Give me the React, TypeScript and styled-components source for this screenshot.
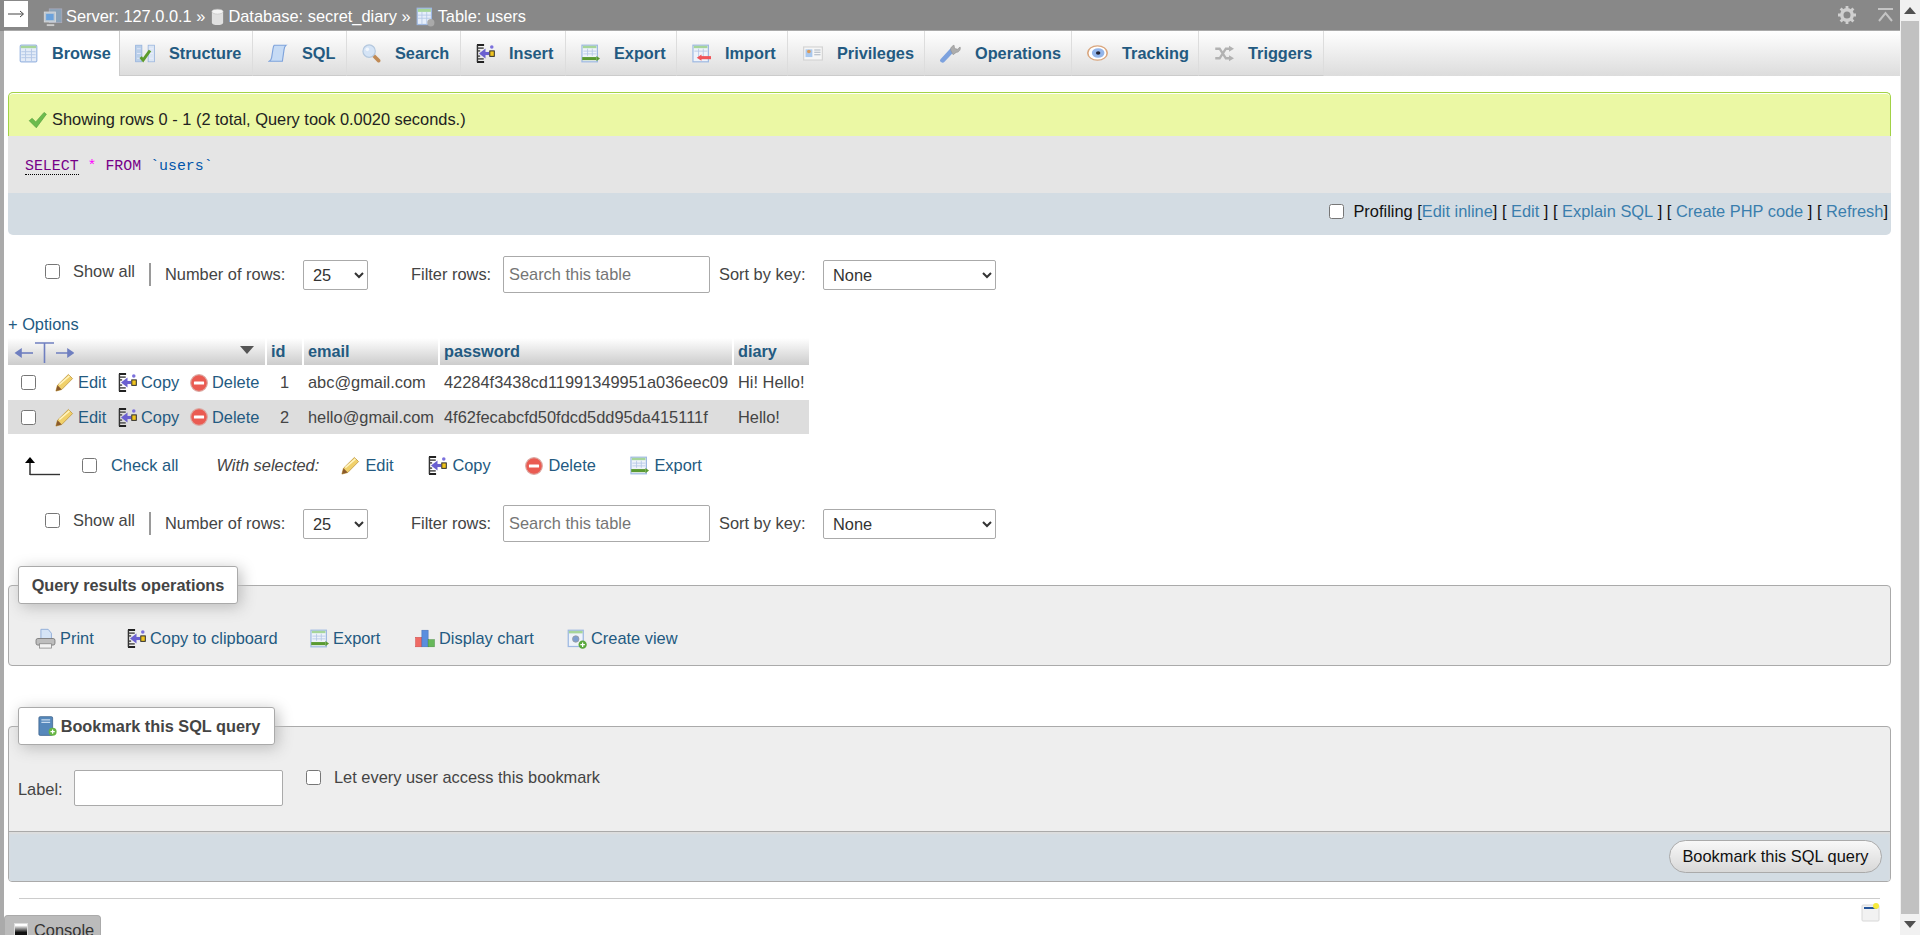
import React from "react";
import styled, { createGlobalStyle } from "styled-components";

const Global = createGlobalStyle`
  html, body { margin: 0; padding: 0; height: 100%; overflow: hidden; background: #fff; }
  body { font-family: "Liberation Sans", Arial, sans-serif; font-size: 16.4px; color: #444; }
  * { box-sizing: border-box; }
`;

const Shell = styled.div`display:flex;height:935px;width:1920px;overflow:hidden;`;
const LeftStrip = styled.div`width:4px;flex:none;background:linear-gradient(#888 31px,#aaa 31px);`;
const Main = styled.div`flex:1;min-width:0;position:relative;height:935px;overflow:hidden;`;
const ScrollTrack = styled.div`width:20px;flex:none;background:#f1f1f1;display:flex;flex-direction:column;align-items:center;`;
const ScrollBtn = styled.div`height:21px;flex:none;display:flex;align-items:center;justify-content:center;width:100%;`;
const ScrollThumb = styled.div`flex:1;width:18px;background:#c1c1c1;`;
const TopBar = styled.div`height:31px;background:#888;border-bottom:1px solid #aaa;display:flex;align-items:center;padding:3px 7px 0 39px;color:#fff;font-size:16.4px;position:relative;`;
const Toggle = styled.div`position:absolute;left:0;top:1px;width:24px;height:26px;background:#fff;display:flex;align-items:center;justify-content:center;`;
const Crumb = styled.span`display:inline-flex;align-items:center;gap:3px;margin-right:5px;white-space:pre;`;
const TopRight = styled.div`margin-left:auto;display:flex;align-items:center;gap:21px;margin-top:-3px;`;
const TabBar = styled.div`height:45px;display:flex;background:linear-gradient(#fff,#dcdcdc);`;
const Tab = styled.div<{ $w: number; $on?: boolean }>`
  width:${p => p.$w}px;flex:none;height:45px;display:flex;align-items:center;
  border-right:1px solid ${p => (p.$on ? "#ccc" : "#ddd")};border-bottom:${p => (p.$on ? "none" : "1px solid #ccc")};padding-left:15px;
  font-weight:700;font-size:16.3px;color:#235a81;gap:14px;background:${p => (p.$on ? "#fff" : "transparent")};
`;
const Content = styled.div`padding-left:4px;width:1887px;`;
const Success = styled.div`margin-top:16px;height:44px;background:#ebf8a4;border:1px solid #a2d246;border-bottom:none;border-radius:5px 5px 0 0;box-shadow:inset 0 1px 0 #fff;display:flex;align-items:center;padding:10px 0 0 19px;color:#222;font-size:16.4px;gap:5px;`;
const SqlBox = styled.div`height:57px;background:#e5e5e5;padding:23px 0 0 17px;font-family:"Liberation Mono",monospace;font-size:14.9px;line-height:15px;`;
const Kw = styled.span`color:#708;border-bottom:1px dotted #000;`;
const Kw2 = styled.span`color:#708;`;
const Star = styled.span`color:#f0f;`;
const Tbl = styled.span`color:#05a;`;
const Toolbar = styled.div`height:42px;background:#d3dce3;border-radius:0 0 5px 5px;display:flex;align-items:center;justify-content:flex-end;color:#111;padding:0 3px 5px 0;font-size:16.4px;white-space:pre;`;
const ProfileCheck = styled.span`display:flex;margin-right:9px;`;
const L = styled.a`color:#3a7ead;text-decoration:none;`;
const DarkL = styled.a`color:#235a81;text-decoration:none;`;
const Check = styled.input.attrs({ type: "checkbox" })`width:15px;height:15px;margin:0;flex:none;accent-color:#fff;`;
const FilterRow = styled.div<{ $top: number }>`margin-top:${p => p.$top}px;height:37px;display:flex;align-items:center;color:#444;font-size:16.4px;`;
const ShowAll = styled.div`display:flex;align-items:center;margin-left:37px;width:104px;gap:13px;margin-top:-6px;`;
const Sep = styled.div`width:2px;height:23px;background:#9a9a9a;margin-right:14px;`;
const NumLabel = styled.span`width:138px;flex:none;`;
const Sel = styled.select<{ $w: number }>`width:${p => p.$w}px;height:30px;flex:none;font:16.4px "Liberation Sans",Arial,sans-serif;color:#333;background:#fff;border:1px solid #aaa;border-radius:2px;padding-left:5px;`;
const FilterLabel = styled.span`margin-left:43px;width:92px;flex:none;`;
const Search = styled.input`width:207px;height:37px;flex:none;border:1px solid #aaa;border-radius:2px;padding:0 5px;font:16.4px "Liberation Sans",Arial,sans-serif;background:#fff;&::placeholder{color:#757575;}`;
const SortLabel = styled.span`margin-left:9px;width:104px;flex:none;`;
const Options = styled(DarkL)`display:block;margin:22px 0 4px;height:19px;line-height:19px;font-size:16.4px;`;
const TableGrid = styled.div`width:801px;display:grid;grid-template-columns:257px 2px 35px 2px 134px 2px 292px 2px 75px;`;
const Head = styled.div`height:27px;background:linear-gradient(#fff,#ccc);font-weight:700;color:#235a81;font-size:16.3px;display:flex;align-items:center;padding-left:4px;position:relative;`;
const HeadGap = styled.div``;
const Cell = styled.div<{ $alt?: boolean; $h: number; $pad?: number; $center?: boolean }>`
  height:${p => p.$h}px;background:${p => (p.$alt ? "#ddd" : "#fff")};display:flex;align-items:center;
  padding-left:${p => p.$pad ?? 4}px;font-size:16.4px;color:#444;white-space:nowrap;overflow:hidden;
  ${p => (p.$center ? "justify-content:center;padding-left:0;" : "")}
`;
const ActionCell = styled(Cell)`padding-left:13px;`;
const ActSpacer = styled.span`width:19px;flex:none;`;
const Act = styled(DarkL)<{ $w: number }>`display:inline-flex;align-items:center;gap:4px;width:${p => p.$w}px;flex:none;`;
const Drop = styled.span`position:absolute;right:11px;top:8px;width:0;height:0;border-left:7px solid transparent;border-right:7px solid transparent;border-top:8px solid #555;`;
const CheckAllRow = styled.div`height:37px;margin-top:13px;display:flex;align-items:center;font-size:16.4px;`;
const ArrowSlot = styled.span`margin-left:16px;width:58px;flex:none;display:flex;`;
const CheckAllLink = styled(DarkL)`margin-left:14px;`;
const Ital = styled.i`color:#444;margin-left:38px;width:125px;flex:none;`;
const BulkLink = styled(DarkL)<{ $w: number }>`display:inline-flex;align-items:center;gap:5px;width:${p => p.$w}px;flex:none;`;
const Field = styled.div<{ $top: number; $h: number }>`margin-top:${p => p.$top}px;height:${p => p.$h}px;background:#eee;border:1px solid #aaa;border-radius:4px;position:relative;`;
const Legend = styled.div<{ $w: number; $t: number; $pad?: number }>`position:absolute;left:9px;top:${p => p.$t}px;width:${p => p.$w}px;height:38px;background:#fff;border:1px solid #aaa;border-radius:3px;box-shadow:3px 3px 15px #bbb;font-weight:700;color:#444;font-size:16.3px;display:flex;align-items:center;justify-content:center;gap:4px;padding-left:${p => p.$pad ?? 0}px;`;
const OpsRow = styled.div`display:flex;align-items:center;padding-top:26px;padding-left:26px;font-size:16.4px;height:100%;`;
const OpLink = styled(DarkL)<{ $w: number }>`display:inline-flex;align-items:center;gap:4px;width:${p => p.$w}px;flex:none;`;
const BmBody = styled.div`height:104px;display:flex;padding-left:9px;font-size:16.4px;`;
const BmLabel = styled.span`margin-top:53px;width:56px;flex:none;`;
const BmInput = styled.input`margin-top:43px;width:209px;height:36px;border:1px solid #aaa;border-radius:2px;background:#fff;flex:none;`;
const BmCheck = styled.div`margin:43px 0 0 23px;display:flex;align-items:center;gap:13px;height:15px;`;
const BmFoot = styled.div`height:50px;background:#d3dce3;border-top:1px solid #aaa;border-radius:0 0 3px 3px;display:flex;align-items:center;justify-content:flex-end;padding-right:8px;box-shadow:inset 0 2px 2px #ddd;`;
const BmButton = styled.button`width:213px;height:33px;border:1px solid #aaa;border-radius:17px;background:linear-gradient(#f8f8f8,#d8d8d8);font:16.4px "Liberation Sans",Arial,sans-serif;color:#111;padding:0;`;
const Rule = styled.div`margin:16px 0 0 11px;height:1px;background:#ccc;width:1861px;`;
const ConsoleTab = styled.div`position:absolute;left:0;top:915px;width:97px;height:24px;background:#bbb;border:1px solid #aaa;border-bottom:none;border-radius:4px 4px 0 0;display:flex;align-items:center;gap:6px;padding:6px 0 0 9px;font-size:16.4px;color:#333;`;
const ConsoleIco = styled.span`width:14px;height:16px;background:linear-gradient(#fff 10%,#111 60%);border:1px solid #ddd;flex:none;`;
const NoteIco = styled.div`position:absolute;left:1857px;top:902px;`;

type P = { s?: number };
const Svg: React.FC<React.PropsWithChildren<P & { w?: number }>> = ({ s = 18, w, children }) => (
  <svg width={w ?? s} height={s} viewBox="0 0 16 16" preserveAspectRatio="none" style={{ flex: "none" }}>{children}</svg>
);
const TableIco: React.FC<P> = ({ s }) => (
  <Svg s={s}><rect x="1" y="1" width="14" height="14" rx="1" fill="#e4ecf8" stroke="#9db8e2" /><rect x="1.5" y="1.5" width="13" height="2" fill="#a6d59a" />
    <path d="M2 6.5h12M2 9h12M2 11.5h12M5.5 4v10.5M10.5 4v10.5" stroke="#b4c8e6" strokeWidth=".8" /></Svg>
);
const StructIco: React.FC<P> = ({ s }) => (
  <Svg s={s} w={20}><rect x=".5" y="1" width="5" height="14" fill="#b9cfe9" stroke="#93b0dc" strokeWidth=".6" /><rect x="10.5" y="1" width="5" height="14" fill="#dbe6f4" stroke="#93b0dc" strokeWidth=".6" />
    <path d="M1.5 4h3M1.5 8h3M1.5 12h3M11.5 4h3M11.5 8h3M11.5 12h3" stroke="#eef" strokeWidth=".6" />
    <path d="M4.5 11 L6.5 13.5 L12 5.5" stroke="#5d9c2b" strokeWidth="2.4" fill="none" /></Svg>
);
const SqlIco: React.FC<P> = ({ s }) => (
  <Svg s={s} w={20}><path d="M5 1h9.5c-1 .8-1.5 2-1.7 4l-1.3 9.500H1c1-.6 1.700-1.600 1.900-3L4 4C4.200 2.500 4.400 1.600 5 1z" fill="#c6dbf5" stroke="#7ea3dc" strokeWidth=".9" /></Svg>
);
const SearchIco: React.FC<P> = ({ s }) => (
  <Svg s={s}><path d="M9.500 9.500l4.500 4.500" stroke="#c08a55" strokeWidth="3" strokeLinecap="round" /><circle cx="6" cy="6" r="5.2" fill="#d5e4f6" stroke="#b4c8de" /><circle cx="4.500" cy="4.500" r="1.500" fill="#f2f7fd" /></Svg>
);
const CopyIco: React.FC<P> = ({ s }) => (
  <Svg s={s}><path d="M.8 .9h6M.8 15.1h6" stroke="#222" strokeWidth="1.700" /><path d="M1 3.500h5.500M1 5.800h2.500M1 10.200h2.500M1 12.500h5.500" stroke="#666" strokeWidth="1.400" /><path d="M1.200 1v14" stroke="#333" strokeWidth="1.200" />
    <path d="M11 8H6.500" stroke="#6a60d0" strokeWidth="2.600" /><path d="M8 3.800L2.500 8 8 12.200z" fill="#6a60d0" /><rect x="11.6" y="5.8" width="3.800" height="4.600" fill="#f0c420" stroke="#222" strokeWidth=".8" /><circle cx="13.300" cy="2.500" r="1.500" fill="#7b70dd" /></Svg>
);
const ExportIco: React.FC<P> = ({ s }) => (
  <Svg s={s}><rect x=".8" y="1" width="13" height="14" fill="#eef3fa" stroke="#9db8e2" /><rect x="1.5" y="1.5" width="11.5" height="2" fill="#a6d59a" />
    <path d="M2 6h11M2 8.300h11M5.500 4v6M9.500 4v6" stroke="#b4c8e6" strokeWidth=".7" /><path d="M1 12.300h12" stroke="#5a9a32" strokeWidth="2.600" /><path d="M13 10l3 2.300-3 2.300z" fill="#5a9a32" /></Svg>
);
const ImportIco: React.FC<P> = ({ s }) => (
  <Svg s={s}><rect x=".8" y="1" width="13" height="14" fill="#eef3fa" stroke="#9db8e2" /><rect x="1.5" y="1.5" width="11.5" height="2" fill="#a6d59a" />
    <path d="M2 6h11M5.500 4v8M9.500 4v8" stroke="#b4c8e6" strokeWidth=".7" /><path d="M7 11.500h9" stroke="#f0555a" strokeWidth="2.600" /><path d="M8 8.800L4 11.500l4 2.700z" fill="#f0555a" /></Svg>
);
const PrivIco: React.FC<P> = ({ s }) => (
  <Svg s={s} w={20}><rect x=".5" y="2.5" width="15" height="11" fill="#f6f6f6" stroke="#d4d4d4" /><rect x="2" y="4.5" width="5.5" height="6.5" fill="#a9c8ee" /><circle cx="4.7" cy="6.3" r="1.5" fill="#d99a5b" />
    <path d="M9 5h5M9 7h5M9 9h5" stroke="#aab4c0" strokeWidth=".9" /></Svg>
);
const WrenchIco: React.FC<P> = ({ s }) => (
  <Svg s={s} w={21}><path d="M2 13.800L9 5.500" stroke="#7da2de" strokeWidth="3.800" strokeLinecap="round" /><path d="M8.500 6c-1-2 0-4 2.200-5l.4 2.800 2.300.6L15.300 2.500c.6 2.200-.6 4.400-3 4.600L10 9z" fill="#adadad" stroke="#909090" strokeWidth=".5" /></Svg>
);
const EyeIco: React.FC<P> = () => (
  <Svg s={16} w={21}><ellipse cx="8" cy="8" rx="7.4" ry="7.2" fill="#fff" stroke="#d9a57c" strokeWidth="1.2" /><circle cx="8.5" cy="8" r="4.8" fill="#93b5ea" /><circle cx="8.5" cy="8" r="1.7" fill="#223" /></Svg>
);
const TrigIco: React.FC<P> = ({ s }) => (
  <Svg s={s} w={20}><path d="M1 4h3.500l5 8H12M1 12h3.500l5-8H12" stroke="#b2b2b2" strokeWidth="1.900" fill="none" /><path d="M12 1.500L16 4l-4 2.500zM12 9.500l4 2.500-4 2.500z" fill="#b2b2b2" /></Svg>
);
const PencilIco: React.FC<P> = ({ s }) => (
  <Svg s={s}><path d="M.8 15.200l1.300-4.900L11.300 1.200 14.800 4.700 5.700 13.900z" fill="#f0d06a" stroke="#c09a45" strokeWidth=".7" /><path d="M.8 15.200l1.300-4.900L5.700 13.900z" fill="#8a5a2c" /><path d="M3.600 9.800L12.200 2.400" stroke="#fff4c0" strokeWidth="1.200" /></Svg>
);
const DelIco: React.FC<P> = ({ s }) => (
  <Svg s={s}><circle cx="8" cy="8" r="7.4" fill="#ea5b52" stroke="#dba9a3" /><rect x="3.5" y="6.6" width="9" height="2.8" rx=".4" fill="#fff" /></Svg>
);
const CheckIco: React.FC = () => (
  <Svg s={19}><path d="M1 9l2.500-2L6.500 10 13.500 2l2 1.500L7 15z" fill="#6cbb4d" stroke="#4e9a3a" strokeWidth=".5" /></Svg>
);
const PrintIco: React.FC = () => (
  <Svg s={21}><path d="M4.500 1h5.500l2.500 3v5H4.500z" fill="#d5e4f6" stroke="#8eabd8" strokeWidth=".7" /><rect x=".8" y="8" width="14.4" height="5" rx="1.4" fill="#bdbdbd" stroke="#7c7c7c" strokeWidth=".7" /><rect x="3.5" y="12" width="9" height="3.3" fill="#f2f2f2" stroke="#888" strokeWidth=".6" /></Svg>
);
const ChartIco: React.FC = () => (
  <Svg s={19} w={20}><rect x=".5" y="7" width="5" height="8" fill="#ef6a64" stroke="#c44" strokeWidth=".4" /><rect x="5.5" y="1" width="5" height="14" fill="#5a8ede" stroke="#3c6bb5" strokeWidth=".4" /><rect x="10.5" y="9" width="5" height="6" fill="#66b85a" stroke="#3f8a38" strokeWidth=".4" /></Svg>
);
const ViewIco: React.FC = () => (
  <Svg s={20}><rect x="1" y="1" width="12" height="13" fill="#eef3fa" stroke="#9db8e2" /><rect x="1.5" y="1.5" width="11" height="2" fill="#a6d59a" /><circle cx="7" cy="8" r="2.6" fill="#7d9fd0" stroke="#999" strokeWidth=".6" /><circle cx="12.5" cy="12.5" r="3.3" fill="#5aa83c" /><path d="M10.700 12.500h3.600M12.500 10.700v3.600" stroke="#fff" strokeWidth="1" /></Svg>
);
const BookIco: React.FC = () => (
  <Svg s={20}><rect x="1.5" y=".5" width="11" height="15" rx="1" fill="#5688bb" stroke="#3c628a" strokeWidth=".6" /><path d="M3.500 3h7M3.500 5h7" stroke="#c8dcf0" strokeWidth="1" /><circle cx="12.5" cy="12.5" r="3.2" fill="#67b544" /><path d="M10.800 12.500h3.400M12.500 10.800v3.400" stroke="#fff" strokeWidth="1" /></Svg>
);
const ServerIco: React.FC = () => (
  <Svg s={20}><rect x="5" y="1.5" width="10" height="11" fill="#8aa2b8" stroke="#aab" strokeWidth=".6" /><rect x="1" y="4" width="9" height="8" fill="#b9c6d2" stroke="#ddd" strokeWidth=".6" /><rect x="2.5" y="5.5" width="6" height="5" fill="#6aa2dc" /><path d="M3 14.500h6" stroke="#ccc" strokeWidth="1.500" /></Svg>
);
const DbIco: React.FC = () => (
  <Svg s={18} w={15}><path d="M2 3.500v9.500c0 1.300 2.700 2.200 6 2.200s6-.9 6-2.200V3.500z" fill="#e0e0e0" /><ellipse cx="8" cy="3.2" rx="6" ry="2.2" fill="#f4f4f4" stroke="#bbb" strokeWidth=".5" /></Svg>
);
const TblSmall: React.FC = () => (
  <Svg s={20} w={19}><rect x="1" y="1" width="12" height="13" fill="#e6eefa" stroke="#9db8e2" /><rect x="1.5" y="1.5" width="11" height="2.4" fill="#a6d59a" /><path d="M1.500 6.500h11M1.500 9h11M5 4v10M9 4v10" stroke="#b4c8e6" strokeWidth=".7" /><circle cx="12.5" cy="12.5" r="3" fill="#a9a9a9" /></Svg>
);
const Gear: React.FC = () => (
  <svg width="20" height="20" viewBox="0 0 20 20" fill="none">
    <circle cx="10" cy="10" r="5.2" stroke="#cfcfcf" strokeWidth="3.4" />
    <path d="M10 1v3.500M10 15.500V19M1 10h3.500M15.500 10H19M3.600 3.600l2.500 2.500M13.900 13.900l2.500 2.500M16.400 3.600l-2.500 2.500M6.100 13.900l-2.500 2.500" stroke="#cfcfcf" strokeWidth="2.8" />
  </svg>
);
const Collapse: React.FC = () => (
  <svg width="15" height="14" viewBox="0 0 15 14" fill="none"><path d="M0 1h15" stroke="#c4c4c4" strokeWidth="2" /><path d="M1 13L7.500 5 14 13" stroke="#c4c4c4" strokeWidth="2" /></svg>
);
const ToggleArrow: React.FC = () => (
  <svg width="16" height="8" viewBox="0 0 16 8" fill="none" stroke="#444"><path d="M0 4h15M12 1l3.500 3L12 7" /></svg>
);
const ColArrows: React.FC = () => (
  <svg width="62" height="22" viewBox="0 0 62 22" fill="none" stroke="#6f7fc0" strokeWidth="1.6">
    <path d="M5 12h16" /><path d="M4 12l5-3.500v7z" fill="#6f7fc0" /><path d="M23 2h19M32.500 2v20M44 12h16" /><path d="M61 12l-5-3.500v7z" fill="#6f7fc0" />
  </svg>
);
const UpArrow: React.FC = () => (
  <svg width="36" height="20" viewBox="0 0 36 20" fill="none"><path d="M6 19V6" stroke="#222" strokeWidth="1.4" /><path d="M1 7L6 1l5 6z" fill="#000" /><path d="M6 18.500h30" stroke="#333" strokeWidth="1.4" /></svg>
);
const Note: React.FC = () => (
  <svg width="20" height="20" viewBox="0 0 20 20"><rect x="1" y="3" width="17" height="16" rx="1" fill="#f2f2f2" stroke="#d8d8d8" /><rect x="3" y="5" width="13" height="2" fill="#25569b" /><circle cx="15" cy="4" r="3" fill="#f6ea3c" /></svg>
);
const Tri: React.FC<{ up?: boolean }> = ({ up }) => (
  <svg width="12" height="7" viewBox="0 0 12 7"><path d={up ? "M6 0l6 7H0z" : "M6 7L0 0h12z"} fill="#505050" /></svg>
);

const tabs: [string, number, React.FC<P>][] = [
  ["Browse", 116, TableIco], ["Structure", 133, StructIco], ["SQL", 94, SqlIco], ["Search", 114, SearchIco],
  ["Insert", 105, CopyIco], ["Export", 111, ExportIco], ["Import", 111, ImportIco], ["Privileges", 137, PrivIco],
  ["Operations", 147, WrenchIco], ["Tracking", 127, EyeIco], ["Triggers", 125, TrigIco],
];

const Filters: React.FC<{ top: number }> = ({ top }) => (
  <FilterRow $top={top}>
    <ShowAll><Check /><span>Show all</span></ShowAll>
    <Sep />
    <NumLabel>Number of rows:</NumLabel>
    <Sel $w={65} defaultValue="25"><option>25</option></Sel>
    <FilterLabel>Filter rows:</FilterLabel>
    <Search placeholder="Search this table" />
    <SortLabel>Sort by key:</SortLabel>
    <Sel $w={173} defaultValue="None"><option>None</option></Sel>
  </FilterRow>
);

const Row: React.FC<{ id: string; email: string; pw: string; diary: string; alt?: boolean; h: number }> = ({ id, email, pw, diary, alt, h }) => (
  <>
    <ActionCell $alt={alt} $h={h}>
      <Check />
      <ActSpacer />
      <Act $w={63}><PencilIco s={19} />Edit</Act>
      <Act $w={72}><CopyIco s={19} />Copy</Act>
      <Act $w={72}><DelIco s={18} />Delete</Act>
    </ActionCell>
    <Cell $alt={alt} $h={h} $pad={0} />
    <Cell $alt={alt} $h={h} $center>{id}</Cell>
    <Cell $alt={alt} $h={h} $pad={0} />
    <Cell $alt={alt} $h={h}>{email}</Cell>
    <Cell $alt={alt} $h={h} $pad={0} />
    <Cell $alt={alt} $h={h}>{pw}</Cell>
    <Cell $alt={alt} $h={h} $pad={0} />
    <Cell $alt={alt} $h={h}>{diary}</Cell>
  </>
);

export default function App() {
  return (
    <Shell>
      <Global />
      <LeftStrip />
      <Main>
        <TopBar>
          <Toggle><ToggleArrow /></Toggle>
          <Crumb><ServerIco />Server: 127.0.0.1 »</Crumb>
          <Crumb><DbIco />Database: secret_diary »</Crumb>
          <Crumb><TblSmall />Table: users</Crumb>
          <TopRight><Gear /><Collapse /></TopRight>
        </TopBar>
        <TabBar>
          {tabs.map(([name, w, I], i) => (
            <Tab key={name} $w={w} $on={i === 0}><I s={19} />{name}</Tab>
          ))}
        </TabBar>
        <Content>
          <Success><CheckIco />Showing rows 0 - 1 (2 total, Query took 0.0020 seconds.)</Success>
          <SqlBox><Kw>SELECT</Kw> <Star>*</Star> <Kw2>FROM</Kw2> <Tbl>`users`</Tbl></SqlBox>
          <Toolbar>
            <ProfileCheck><Check /></ProfileCheck>
            Profiling [<L>Edit inline</L>] [ <L>Edit</L> ] [ <L>Explain SQL</L> ] [ <L>Create PHP code</L> ] [ <L>Refresh</L>]
          </Toolbar>
          <Filters top={21} />
          <Options>+ Options</Options>
          <TableGrid>
            <Head><ColArrows /><Drop /></Head><HeadGap />
            <Head>id</Head><HeadGap />
            <Head>email</Head><HeadGap />
            <Head>password</Head><HeadGap />
            <Head>diary</Head>
            <Row h={35} id="1" email="abc@gmail.com" pw="42284f3438cd11991349951a036eec09" diary="Hi! Hello!" />
            <Row h={34} alt id="2" email="hello@gmail.com" pw="4f62fecabcfd50fdcd5dd95da415111f" diary="Hello!" />
          </TableGrid>
          <CheckAllRow>
            <ArrowSlot><UpArrow /></ArrowSlot>
            <Check />
            <CheckAllLink>Check all</CheckAllLink>
            <Ital>With selected:</Ital>
            <BulkLink $w={87}><PencilIco s={19} />Edit</BulkLink>
            <BulkLink $w={97}><CopyIco s={19} />Copy</BulkLink>
            <BulkLink $w={105}><DelIco s={18} />Delete</BulkLink>
            <BulkLink $w={90}><ExportIco s={19} />Export</BulkLink>
          </CheckAllRow>
          <Filters top={21} />
          <Field $top={43} $h={81}>
            <Legend $w={220} $t={-20}>Query results operations</Legend>
            <OpsRow>
              <OpLink $w={92}><PrintIco />Print</OpLink>
              <OpLink $w={183}><CopyIco s={19} />Copy to clipboard</OpLink>
              <OpLink $w={105}><ExportIco s={19} />Export</OpLink>
              <OpLink $w={152}><ChartIco />Display chart</OpLink>
              <OpLink $w={120}><ViewIco />Create view</OpLink>
            </OpsRow>
          </Field>
          <Field $top={60} $h={156}>
            <Legend $w={257} $t={-20} $pad={4}><BookIco />Bookmark this SQL query</Legend>
            <BmBody>
              <BmLabel>Label:</BmLabel>
              <BmInput />
              <BmCheck><Check /><span>Let every user access this bookmark</span></BmCheck>
            </BmBody>
            <BmFoot><BmButton>Bookmark this SQL query</BmButton></BmFoot>
          </Field>
          <Rule />
        </Content>
        <NoteIco><Note /></NoteIco>
        <ConsoleTab><ConsoleIco />Console</ConsoleTab>
      </Main>
      <ScrollTrack>
        <ScrollBtn><Tri up /></ScrollBtn>
        <ScrollThumb />
        <ScrollBtn><Tri /></ScrollBtn>
      </ScrollTrack>
    </Shell>
  );
}
